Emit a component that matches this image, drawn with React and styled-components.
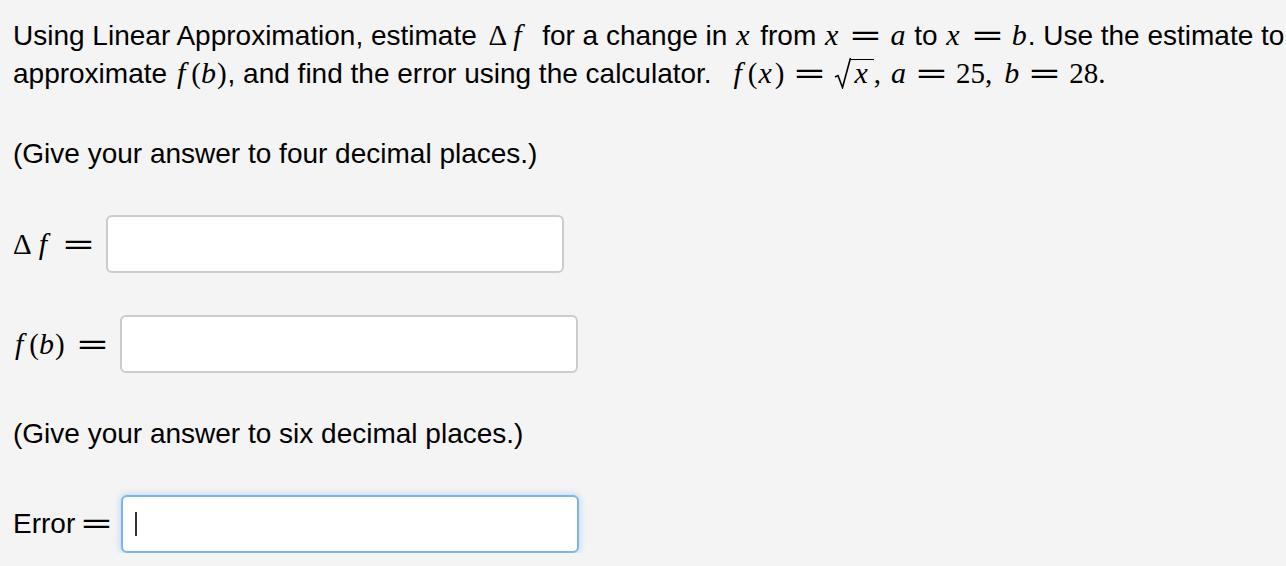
import React from "react";
import styled, { createGlobalStyle } from "styled-components";

const Global = createGlobalStyle`
  html, body { margin: 0; padding: 0; background: #f4f4f4; }
  body { font-family: "Liberation Sans", Arial, sans-serif; color: #000; }
`;

const Page = styled.div`
  display: flex;
  flex-direction: column;
  gap: 42px;
  padding: 17px 0 0 13px;
  font-size: 28px;
  line-height: 38px;
`;

const Para = styled.p`
  margin: 0;
  white-space: nowrap;
`;

/* italic math variable; $l / $r give the extra side room TeX glyphs have */
const V = styled.span`
  font-family: "Liberation Serif", "Times New Roman", serif;
  font-size: 30px;
  line-height: 1;
  font-style: italic;
  padding-left: ${(p) => p.$l ?? 0}px;
  padding-right: ${(p) => p.$r ?? 0}px;
`;

/* upright math: digits, parens, Δ, punctuation */
const U = styled.span`
  font-family: "Liberation Serif", "Times New Roman", serif;
  font-size: 29px;
  line-height: 1;
  padding-left: ${(p) => p.$l ?? 0}px;
  padding-right: ${(p) => p.$r ?? 0}px;
`;

/* relation sign: a wide TeX-like "=" with thick spacing on each side */
const Op = styled.span`
  display: inline-block;
  width: ${(p) => 23 + 2 * (p.$m ?? 13)}px;
  text-align: center;
  font-family: "DejaVu Serif", "Liberation Serif", serif;
  font-size: 30px;
  line-height: 1;
`;

const OpGlyph = styled.span`
  display: inline-block;
  transform: scaleX(1.35);
`;

const MathStart = styled.span`
  padding-left: ${(p) => p.$l}px;
`;

const Sqrt = styled.span`
  font-family: "Liberation Serif", "Times New Roman", serif;
  font-size: 30px;
  line-height: 1;
  display: inline-block;
  position: relative;
  padding-left: 16px;
`;

const RadicalSign = styled.svg`
  position: absolute;
  left: 0;
  top: -1px;
  width: 17px;
  height: 32px;
`;

const Radicand = styled.span`
  display: inline-block;
  border-top: 1.5px solid #000;
  font-style: italic;
  line-height: 25px;
  padding: 0 6px 0 4px;
`;

const Row = styled.div`
  display: flex;
  align-items: center;
  gap: ${(p) => p.$gap}px;
  height: 58px;
`;

const Label = styled.span`
  display: inline-flex;
  align-items: baseline;
`;

const Input = styled.div`
  width: 458px;
  height: 58px;
  box-sizing: border-box;
  background: #fff;
  border: 2px solid ${(p) => (p.$focus ? "#7ab6ec" : "#cccccc")};
  border-radius: 6px;
  box-shadow: ${(p) => (p.$focus ? "0 0 6px 1px rgba(122,182,236,0.45)" : "none")};
  display: flex;
  align-items: center;
  padding-left: 12px;
`;

const Caret = styled.span`
  width: 1.5px;
  height: 24px;
  background: #333;
`;

const F = () => <V $l={2} $r={5}>f</V>;
const X = () => <V $l={1} $r={3}>x</V>;
const A = () => <V $r={1}>a</V>;
const B = () => <V $r={1}>b</V>;
const L = () => <U $l={1}>(</U>;
const R = () => <U $r={1}>)</U>;
const Eq = ({ m }) => (
  <Op $m={m}>
    <OpGlyph>=</OpGlyph>
  </Op>
);

export default function App() {
  return (
    <>
      <Global />
      <Page>
        <Para>
          Using Linear Approximation, estimate <U $l={4} $r={4}>Δ</U><F />&nbsp;&nbsp;for a change in <X /> from{" "}
          <X /><Eq /><A /> to <X /><Eq /><B />. Use the estimate to
          <br />
          approximate <F /><L /><B /><R />, and find the error using the calculator.{" "}
          <MathStart $l={12}>
            <F /><L /><X /><R /><Eq />
            <Sqrt>
              <RadicalSign viewBox="0 0 17 32" fill="none" stroke="#000" strokeWidth="1.6">
                <path d="M1 20 L4 18.5 L8.5 30.5 L16.5 1" />
              </RadicalSign>
              <Radicand>x</Radicand>
            </Sqrt>
            <U $r={10}>,</U><A /><Eq /><U>25</U><U $r={12}>,</U><B /><Eq /><U>28.</U>
          </MathStart>
        </Para>
        <Para>(Give your answer to four decimal places.)</Para>
        <Row $gap={1}>
          <Label>
            <U $r={5}>Δ</U><F /><Eq m={15} />
          </Label>
          <Input />
        </Row>
        <Row $gap={1}>
          <Label>
            <F /><L /><B /><R /><Eq m={15} />
          </Label>
          <Input />
        </Row>
        <Para>(Give your answer to six decimal places.)</Para>
        <Row $gap={3}>
          <Label>
            Error<Eq m={10} />
          </Label>
          <Input $focus>
            <Caret />
          </Input>
        </Row>
      </Page>
    </>
  );
}
